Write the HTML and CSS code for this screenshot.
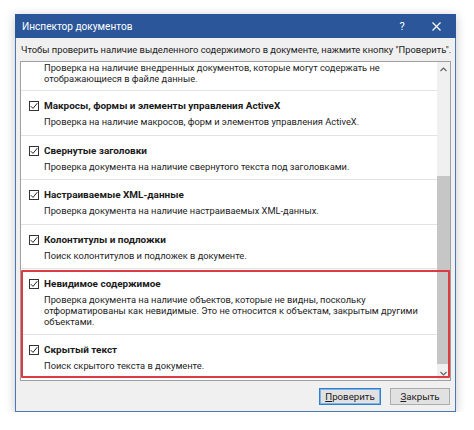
FILE: index.html
```html
<!DOCTYPE html>
<html lang="ru">
<head>
<meta charset="utf-8">
<title>Инспектор документов</title>
<link rel="stylesheet" href="styles.css">
</head>
<body>
<div class="dialog">
  <div class="titlebar">
    <span class="title">Инспектор документов</span>
    <span class="tb-help">?</span>
    <svg class="tb-close" width="9" height="9" viewBox="0 0 9 9"><path d="M0.5 0.5 L8.5 8.5 M8.5 0.5 L0.5 8.5" stroke="#fff" stroke-width="1.2" fill="none"/></svg>
  </div>
  <div class="body">
    <p class="intro">Чтобы проверить наличие выделенного содержимого в документе, нажмите кнопку "Проверить".</p>
    <div class="list">
      <div class="items">
        <div class="item first">
          <div class="desc">Проверка на наличие внедренных документов, которые могут содержать не<br>отображающиеся в файле данные.</div>
        </div>
        <div class="item">
          <div class="head"><span class="cb"><svg width="8" height="8" viewBox="0 0 8 8"><path d="M0.8 4.2 L3 6.4 L7.3 1.2" stroke="#222" stroke-width="1" fill="none"/></svg></span><span class="name">Макросы, формы и элементы управления ActiveX</span></div>
          <div class="desc">Проверка на наличие макросов, форм и элементов управления ActiveX.</div>
        </div>
        <div class="item">
          <div class="head"><span class="cb"><svg width="8" height="8" viewBox="0 0 8 8"><path d="M0.8 4.2 L3 6.4 L7.3 1.2" stroke="#222" stroke-width="1" fill="none"/></svg></span><span class="name">Свернутые заголовки</span></div>
          <div class="desc">Проверка документа на наличие свернутого текста под заголовками.</div>
        </div>
        <div class="item">
          <div class="head"><span class="cb"><svg width="8" height="8" viewBox="0 0 8 8"><path d="M0.8 4.2 L3 6.4 L7.3 1.2" stroke="#222" stroke-width="1" fill="none"/></svg></span><span class="name">Настраиваемые XML-данные</span></div>
          <div class="desc">Проверка документа на наличие настраиваемых XML-данных.</div>
        </div>
        <div class="item">
          <div class="head"><span class="cb"><svg width="8" height="8" viewBox="0 0 8 8"><path d="M0.8 4.2 L3 6.4 L7.3 1.2" stroke="#222" stroke-width="1" fill="none"/></svg></span><span class="name">Колонтитулы и подложки</span></div>
          <div class="desc">Поиск колонтитулов и подложек в документе.</div>
        </div>
        <div class="item multi">
          <div class="head"><span class="cb"><svg width="8" height="8" viewBox="0 0 8 8"><path d="M0.8 4.2 L3 6.4 L7.3 1.2" stroke="#222" stroke-width="1" fill="none"/></svg></span><span class="name">Невидимое содержимое</span></div>
          <div class="desc">Проверка документа на наличие объектов, которые не видны, поскольку<br>отформатированы как невидимые. Это не относится к объектам, закрытым другими<br>объектами.</div>
        </div>
        <div class="item last">
          <div class="head"><span class="cb"><svg width="8" height="8" viewBox="0 0 8 8"><path d="M0.8 4.2 L3 6.4 L7.3 1.2" stroke="#222" stroke-width="1" fill="none"/></svg></span><span class="name">Скрытый текст</span></div>
          <div class="desc">Поиск скрытого текста в документе.</div>
        </div>
      </div>
      <div class="scrollbar">
        <div class="arrow"><svg width="7" height="5" viewBox="0 0 7 5"><path d="M0.5 4 L3.5 1 L6.5 4" stroke="#606060" stroke-width="1.1" fill="none"/></svg></div>
        <div class="track"><div class="thumb"></div></div>
        <div class="arrow"><svg width="7" height="5" viewBox="0 0 7 5"><path d="M0.5 1 L3.5 4 L6.5 1" stroke="#606060" stroke-width="1.1" fill="none"/></svg></div>
      </div>
      <div class="highlight"></div>
    </div>
    <div class="buttons">
      <button class="btn default"><u>П</u>роверить</button>
      <button class="btn"><u>З</u>акрыть</button>
    </div>
  </div>
</div>
</body>
</html>
```

FILE: styles.css
```css
html, body {
  margin: 0;
  padding: 0;
  background: #ffffff;
}
body {
  font-family: Roboto, "Noto Sans", sans-serif;
  color: #1a1a1a;
  padding: 14px 0 0 15px;
}
.dialog {
  width: 441px;
  height: 398px;
  box-sizing: border-box;
  border: 1px solid #4a78b5;
  border-top: none;
  background: #f0f0f0;
  box-shadow: 0 2px 10px rgba(0, 0, 0, 0.22);
  display: flex;
  flex-direction: column;
}
.titlebar {
  height: 24px;
  margin: 0 -1px;
  background: #2b579a;
  color: #ffffff;
  display: flex;
  align-items: center;
  padding: 0 0 0 7px;
}
.title {
  font-size: 10.1px;
  flex: 1;
}
.tb-help {
  font-size: 11px;
  width: 12px;
  text-align: center;
  margin-right: 24px;
}
.tb-close {
  margin-right: 15px;
}
.body {
  flex: 1;
  padding: 6px 4px 0 4px;
  display: flex;
  flex-direction: column;
}
.intro {
  margin: 0 0 5px 1px;
  font-size: 9.35px;
  line-height: 12px;
  white-space: nowrap;
}
.list {
  position: relative;
  height: 320px;
  box-sizing: border-box;
  border: 1px solid #a0a0a0;
  background: #ffffff;
  display: flex;
  overflow: hidden;
}
.items {
  flex: 1;
}
.item {
  padding: 9px 0 7.5px 8px;
  border-bottom: 1px solid #e3e3e3;
}
.item.first {
  padding-top: 0;
  padding-bottom: 6px;
}
.item.multi {
  padding-bottom: 6.5px;
}
.item.last {
  border-bottom: none;
}
.head {
  display: flex;
  align-items: center;
  height: 12px;
}
.cb {
  width: 10px;
  height: 10px;
  box-sizing: border-box;
  border: 1px solid #333333;
  background: #ffffff;
  display: flex;
  align-items: center;
  justify-content: center;
  margin-right: 5px;
}
.name {
  font-size: 9.95px;
  font-weight: bold;
  line-height: 12px;
  white-space: nowrap;
}
.desc {
  margin: 4px 0 0 15px;
  font-size: 9.3px;
  line-height: 11px;
  white-space: nowrap;
  color: #222222;
}
.item.first .desc {
  margin-top: 0;
}
.scrollbar {
  width: 13px;
  background: #f0f0f0;
  display: flex;
  flex-direction: column;
}
.arrow {
  height: 14px;
  display: flex;
  align-items: center;
  justify-content: center;
}
.track {
  flex: 1;
  display: flex;
  flex-direction: column;
  justify-content: flex-end;
  padding: 0 0 2px 0;
}
.thumb {
  height: 188px;
  background: #c6c6c6;
}
.highlight {
  position: absolute;
  left: 0;
  top: 208px;
  width: 429px;
  height: 108px;
  box-sizing: border-box;
  border: 2px solid #dc3b41;
  border-radius: 1px;
  pointer-events: none;
}
.buttons {
  display: flex;
  justify-content: flex-end;
  gap: 9px;
  margin-top: 7px;
  padding-right: 1px;
}
.btn {
  height: 17px;
  width: 60px;
  box-sizing: border-box;
  border: 1px solid #adadad;
  background: #e1e1e1;
  font-family: Roboto, "Noto Sans", sans-serif;
  font-size: 9.7px;
  color: #1a1a1a;
  padding: 0;
  line-height: 14px;
}
.btn.default {
  width: 62px;
  border: 1px solid #2f7fd0;
  box-shadow: inset 0 0 0 1px #7fb3e6;
}
.btn u {
  text-decoration-thickness: 1px;
  text-underline-offset: 1px;
}
```
